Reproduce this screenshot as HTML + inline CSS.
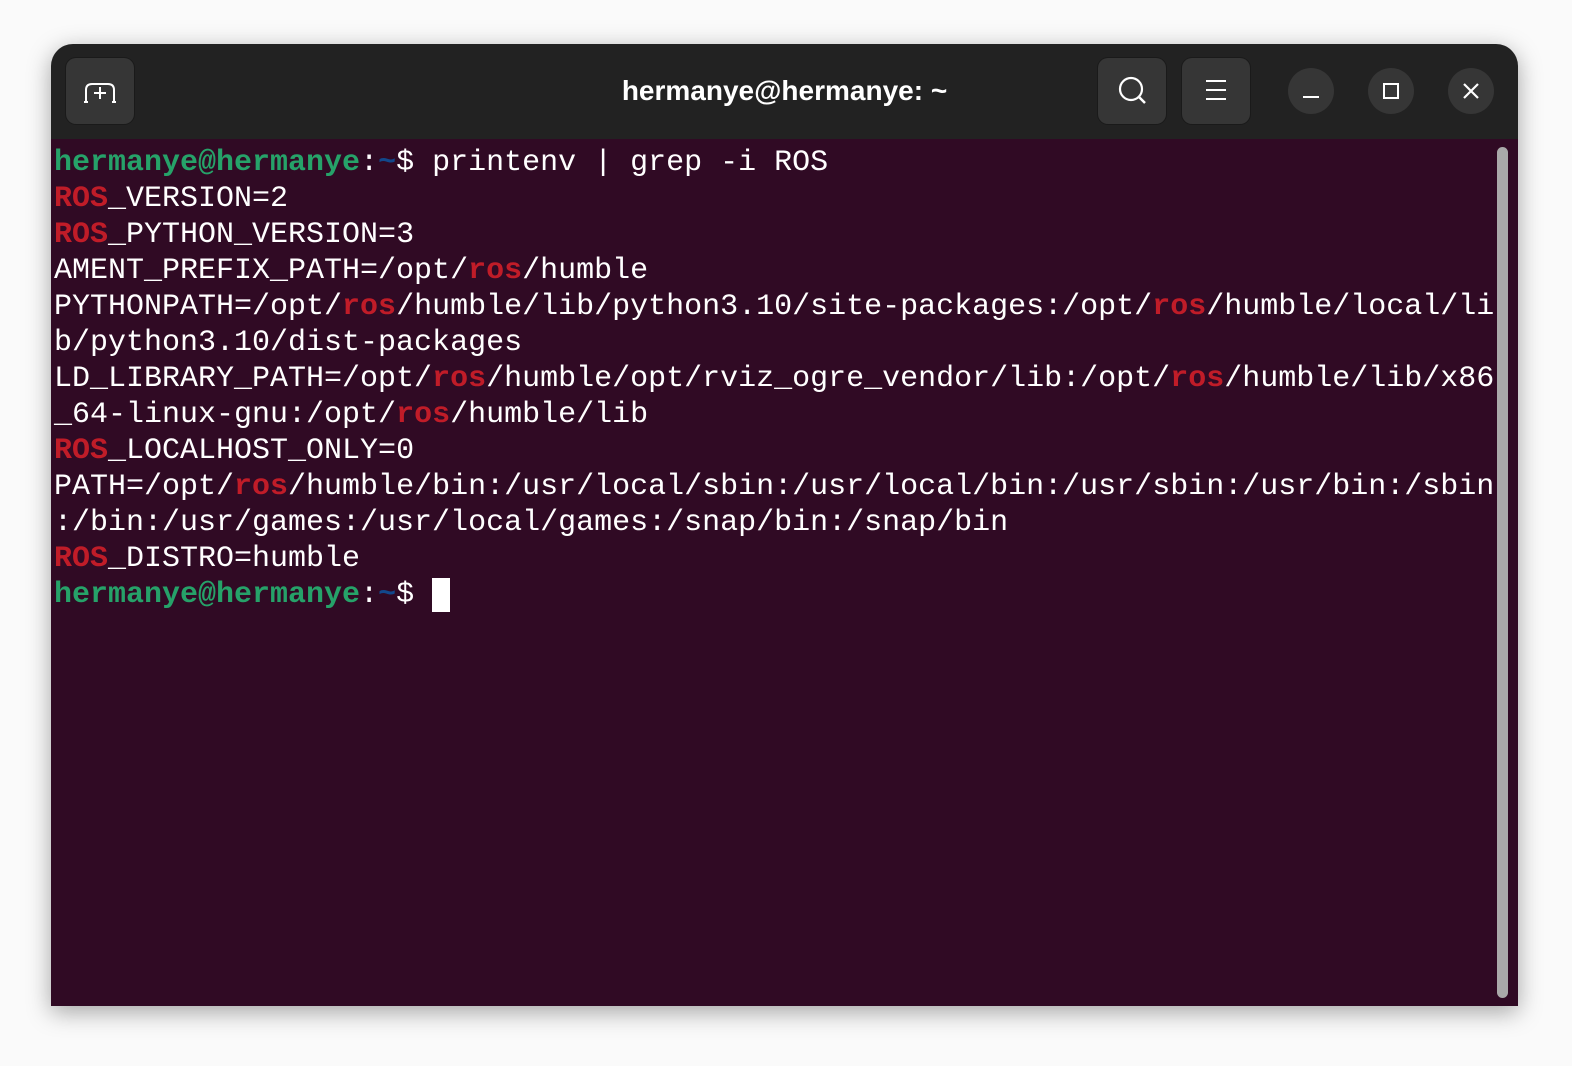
<!DOCTYPE html>
<html><head><style>
html,body{margin:0;padding:0;width:1572px;height:1066px;background:#fafafa;overflow:hidden;}
.win{position:absolute;left:51px;top:44px;width:1467px;height:962px;border-radius:22px 22px 0 0;background:#222;box-shadow:0 6px 24px rgba(0,0,0,.35);overflow:hidden;}
.term{position:absolute;left:0;top:95px;width:100%;bottom:0;background:#300a24;}
pre{position:absolute;left:3px;top:6px;margin:0;font-family:"Liberation Mono",monospace;font-size:30px;line-height:36px;color:#fff;}
.g{color:#26a269;font-weight:bold}.b{color:#12488b;font-weight:bold}.r{color:#c01c28;font-weight:bold}
.cur{display:inline-block;width:18px;height:34px;background:#fff;vertical-align:top;margin-top:1px}
.btn{position:absolute;top:14px;width:68px;height:66px;border-radius:10px;background:#363636;box-shadow:0 0 0 1px #1a1a1a;}
.cb{position:absolute;top:24px;width:46px;height:46px;border-radius:50%;background:#363636;}
.title{position:absolute;left:0;right:0;top:31px;text-align:center;color:#fff;font:bold 28px "Liberation Sans",sans-serif;}
.sb{position:absolute;right:10px;top:8px;width:11px;bottom:8px;border-radius:6px;background:#a9a9a9;}
svg{position:absolute;}
</style></head><body>
<div class="win">
<div class="btn" style="left:15px"><svg width="68" height="66"><path d="M20 44V32q0-6 6-6h16q6 0 6 6v12M18 44h4M46 44h4M34 29v12M28 35h12" stroke="#fff" stroke-width="2" fill="none"/></svg></div>
<div class="title">hermanye@hermanye: ~</div>
<div class="btn" style="left:1047px"><svg width="68" height="66"><circle cx="33" cy="31" r="11" stroke="#fff" stroke-width="2.2" fill="none"/><path d="M41 39l6 6" stroke="#fff" stroke-width="2.5"/></svg></div>
<div class="btn" style="left:1131px"><svg width="68" height="66"><path d="M24 23h20M24 32h20M24 41h20" stroke="#fff" stroke-width="2"/></svg></div>
<div class="cb" style="left:1237px"><svg width="46" height="46"><path d="M15 29h16" stroke="#fff" stroke-width="2"/></svg></div>
<div class="cb" style="left:1317px"><svg width="46" height="46"><rect x="16" y="16" width="14" height="14" stroke="#fff" stroke-width="2" fill="none"/></svg></div>
<div class="cb" style="left:1397px"><svg width="46" height="46"><path d="M16 16l14 14M30 16L16 30" stroke="#fff" stroke-width="2.2"/></svg></div>
<div class="term">
<pre><span class="g">hermanye@hermanye</span>:<span class="b">~</span>$ printenv | grep -i ROS
<span class="r">ROS</span>_VERSION=2
<span class="r">ROS</span>_PYTHON_VERSION=3
AMENT_PREFIX_PATH=/opt/<span class="r">ros</span>/humble
PYTHONPATH=/opt/<span class="r">ros</span>/humble/lib/python3.10/site-packages:/opt/<span class="r">ros</span>/humble/local/li
b/python3.10/dist-packages
LD_LIBRARY_PATH=/opt/<span class="r">ros</span>/humble/opt/rviz_ogre_vendor/lib:/opt/<span class="r">ros</span>/humble/lib/x86
_64-linux-gnu:/opt/<span class="r">ros</span>/humble/lib
<span class="r">ROS</span>_LOCALHOST_ONLY=0
PATH=/opt/<span class="r">ros</span>/humble/bin:/usr/local/sbin:/usr/local/bin:/usr/sbin:/usr/bin:/sbin
:/bin:/usr/games:/usr/local/games:/snap/bin:/snap/bin
<span class="r">ROS</span>_DISTRO=humble
<span class="g">hermanye@hermanye</span>:<span class="b">~</span>$ <span class="cur"></span></pre>
<div class="sb"></div>
</div>
</div>
</body></html>
